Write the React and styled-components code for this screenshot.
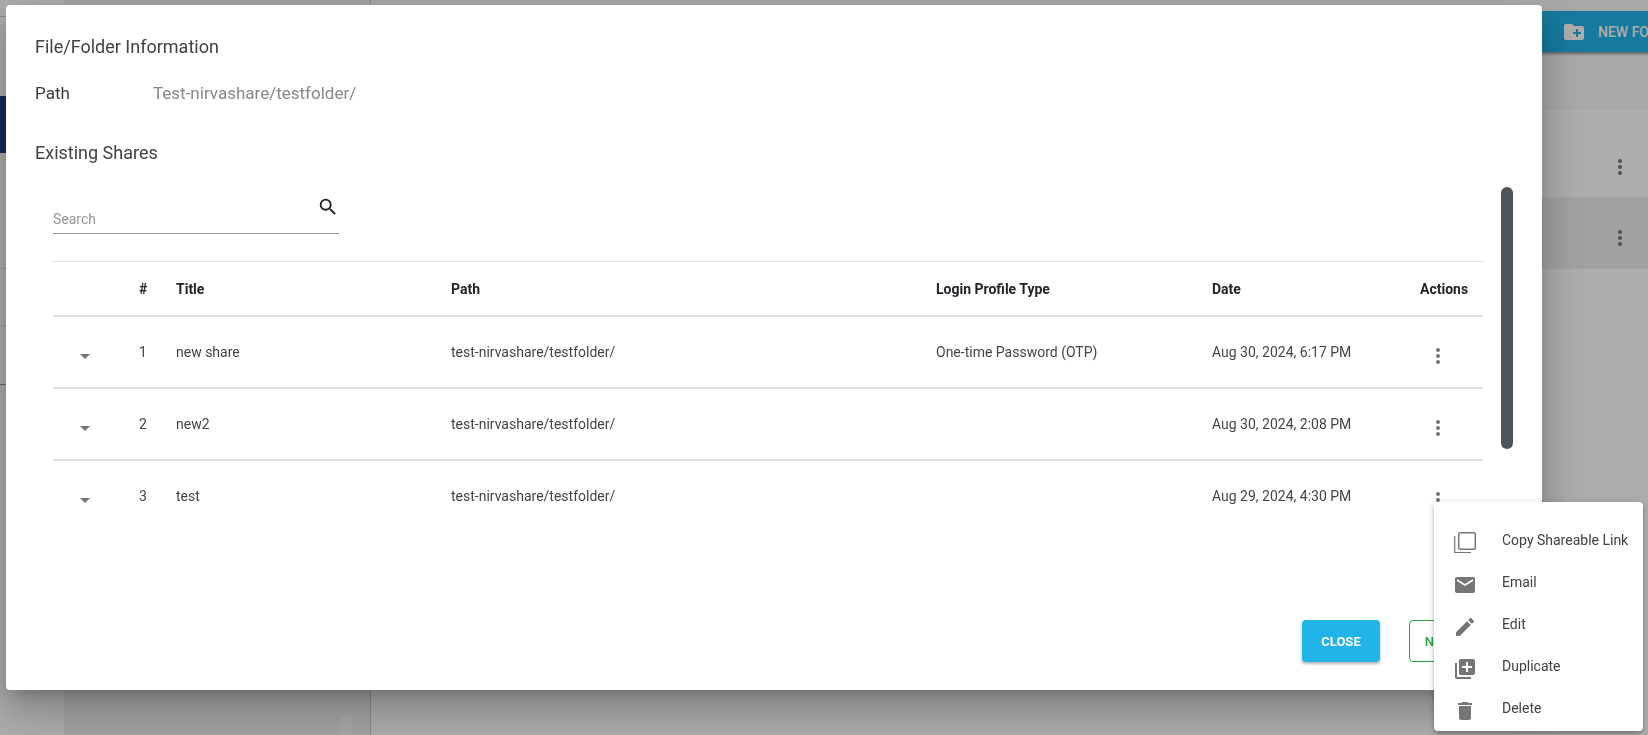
import React from 'react';
import styled, { createGlobalStyle } from 'styled-components';
import {
  MdArrowDropDown,
  MdCreateNewFolder,
  MdDelete,
  MdEdit,
  MdEmail,
  MdLibraryAdd,
  MdMoreVert,
  MdSearch,
} from 'react-icons/md';

const GlobalStyle = createGlobalStyle`
  * {
    box-sizing: border-box;
  }
  body {
    margin: 0;
    overflow: hidden;
    background: #ffffff;
    font-family: Roboto, 'Liberation Sans', sans-serif;
    color: #212529;
  }
  button {
    font-family: inherit;
    cursor: pointer;
  }
`;

/* ---------- page behind the dialog ---------- */

const Page = styled.div`
  display: grid;
  grid-template-columns: 64px 307px 1fr;
  height: 100vh;
  overflow: hidden;
`;

const Rail = styled.nav`
  display: flex;
  flex-direction: column;
`;

const RailItem = styled.div`
  flex: none;
  height: ${(props) => props.height}px;
  background: ${(props) => props.color || 'transparent'};
  border-bottom: 1px solid ${(props) => props.line || 'transparent'};
`;

const Sidebar = styled.aside`
  display: flex;
  align-items: flex-end;
  justify-content: flex-end;
  padding-right: 18px;
  background: #f1f1f1;
  border-right: 1px solid #cccccc;
`;

const SidebarThumb = styled.div`
  width: 12px;
  height: 19px;
  background: #f8f8f8;
`;

const Main = styled.main`
  overflow: hidden;
`;

const MainContent = styled.div`
  width: calc(100% + 72px);
`;

const Toolbar = styled.div`
  display: flex;
  justify-content: flex-end;
  height: 52px;
  padding: 11px 16px 0 0;
  background: #fafafa;
`;

const NewFolderButton = styled.button`
  display: flex;
  align-items: center;
  gap: 12px;
  height: 41px;
  width: 167px;
  padding: 0 25px;
  border: none;
  border-radius: 4px;
  background: #20b4e9;
  color: #ffffff;
  font-size: 14px;
  font-weight: 500;
  white-space: nowrap;
  box-shadow: 0 2px 3px rgba(0, 0, 0, 0.4);

  svg {
    flex: none;
  }
`;

const FileRow = styled.div`
  display: flex;
  align-items: flex-end;
  justify-content: flex-end;
  height: ${(props) => props.height}px;
  padding: 0 88px 18px 0;
  background: ${(props) => props.color || '#ffffff'};
  border-bottom: 1px solid #f2f2f2;
`;

/* ---------- dialog ---------- */

const Backdrop = styled.div`
  position: fixed;
  inset: 0;
  padding: 5px 106px 0 6px;
  background: rgba(0, 0, 0, 0.32);
`;

const Dialog = styled.section`
  padding: 28px 29px;
  background: #ffffff;
  border-radius: 4px;
  box-shadow: 0 11px 15px -7px rgba(0, 0, 0, 0.2),
    0 24px 38px 3px rgba(0, 0, 0, 0.14), 0 9px 46px 8px rgba(0, 0, 0, 0.12);
`;

const Heading = styled.h2`
  margin: 0;
  font-size: 18px;
  line-height: 28px;
  font-weight: 400;
  color: #424242;
`;

const PathLine = styled.dl`
  display: grid;
  grid-template-columns: 118px 1fr;
  margin: 18px 0 32px;
  font-size: 17px;
  line-height: 28px;
`;

const PathLabel = styled.dt`
  color: #3a3a3a;
`;

const PathValue = styled.dd`
  margin: 0;
  color: #888888;
`;

const ScrollArea = styled.div`
  display: flex;
  justify-content: space-between;
  gap: 18px;
  height: 342px;
  margin-top: 20px;
  padding-left: 18px;
  overflow: hidden;
`;

const ScrollBody = styled.div`
  flex: 1;
`;

const ScrollThumb = styled.div`
  width: 12px;
  height: 262px;
  border-radius: 6px;
  background: #4d555b;
`;

const SearchField = styled.label`
  display: flex;
  width: 286px;
  height: 47px;
  margin-bottom: 27px;
  border-bottom: 1px solid #949494;
  color: #212121;

  svg {
    margin: 9px 0 0;
  }
`;

const SearchInput = styled.input`
  flex: 1;
  min-width: 0;
  padding: 18px 0 0;
  border: none;
  outline: none;
  background: none;
  font: 400 14px Roboto, 'Liberation Sans', sans-serif;
  &::placeholder {
    color: #949494;
  }
`;

const Table = styled.table`
  width: 100%;
  table-layout: fixed;
  border-collapse: separate;
  border-spacing: 0;
  border-top: 1px solid #dee2e6;
  font-size: 14px;
`;

const Column = styled.col`
  width: ${(props) => (props.$width ? `${props.$width}px` : 'auto')};
`;

const HeadCell = styled.th`
  height: 55px;
  padding: 0 0 0 12px;
  text-align: left;
  font-weight: 700;
  border-bottom: 2px solid #dee2e6;
`;

const Cell = styled.td`
  height: 72px;
  padding: 0 0 0 12px;
  color: #424548;
  border-bottom: 2px solid #dee2e6;
`;

const IconButton = styled.button`
  display: flex;
  margin-top: 8px;
  margin-left: ${(props) => props.$indent}px;
  padding: 0;
  border: none;
  background: none;
  color: #757575;
`;

const Footer = styled.footer`
  display: flex;
  justify-content: flex-end;
  gap: 29px;
  margin-top: 91px;
`;

const CloseButton = styled.button`
  height: 42px;
  width: 78px;
  border: none;
  border-radius: 4px;
  background: #20b4e9;
  color: #ffffff;
  font-size: 13px;
  font-weight: 700;
  box-shadow: 0 2px 3px rgba(0, 0, 0, 0.3);
`;

const OutlineButton = styled.button`
  height: 42px;
  width: 104px;
  padding: 0;
  border: 1px solid #28a745;
  border-radius: 4px;
  background: #ffffff;
  color: #28a745;
  font-size: 13px;
  font-weight: 500;
`;

/* ---------- row menu ---------- */

const Menu = styled.div`
  position: fixed;
  right: 5px;
  bottom: 4px;
  width: 209px;
  padding: 17px 0 2px;
  border-radius: 4px;
  background: #ffffff;
  box-shadow: 0 2px 4px -1px rgba(0, 0, 0, 0.2),
    0 4px 5px rgba(0, 0, 0, 0.14), 0 1px 10px rgba(0, 0, 0, 0.12);
`;

const MenuItem = styled.button`
  display: flex;
  gap: 25px;
  width: 100%;
  height: 42px;
  padding: 12px 0 0 19px;
  border: none;
  background: none;
  color: #424242;
  font-size: 14px;
  line-height: 18px;
  text-align: left;

  svg {
    flex: none;
    color: #757575;
  }
`;

const CopyIcon = () => (
  <svg width="24" height="24" viewBox="0 0 24 24" fill="none" stroke="currentColor">
    <rect x="5.7" y="1.7" width="16.6" height="16.6" rx="1.5" strokeWidth="1.5" />
    <path d="M1.7 5v16.5H18" strokeWidth="1.2" />
  </svg>
);

const columns = [
  { label: '', width: 74 },
  { label: '#', width: 37 },
  { label: 'Title', width: 275 },
  { label: 'Path' },
  { label: 'Login Profile Type', width: 276 },
  { label: 'Date', width: 208 },
  { label: 'Actions', width: 75 },
];

const shares = [
  {
    title: 'new share',
    path: 'test-nirvashare/testfolder/',
    profile: 'One-time Password (OTP)',
    date: 'Aug 30, 2024, 6:17 PM',
  },
  {
    title: 'new2',
    path: 'test-nirvashare/testfolder/',
    profile: '',
    date: 'Aug 30, 2024, 2:08 PM',
  },
  {
    title: 'test',
    path: 'test-nirvashare/testfolder/',
    profile: '',
    date: 'Aug 29, 2024, 4:30 PM',
  },
];

const menuItems = [
  { label: 'Copy Shareable Link', icon: <CopyIcon /> },
  { label: 'Email', icon: <MdEmail size={24} /> },
  { label: 'Edit', icon: <MdEdit size={24} /> },
  { label: 'Duplicate', icon: <MdLibraryAdd size={24} /> },
  { label: 'Delete', icon: <MdDelete size={24} /> },
];

function Background() {
  return (
    <Page>
      <Rail>
        <RailItem height={17} line="#cccccc" />
        <RailItem height={79} />
        <RailItem height={57} color="#1e4482" />
        <RailItem height={116} line="#e6e6e6" />
        <RailItem height={57} line="#e6e6e6" />
        <RailItem height={59} line="#999999" />
      </Rail>
      <Sidebar>
        <SidebarThumb />
      </Sidebar>
      <Main>
        <MainContent>
          <Toolbar>
            <NewFolderButton>
              <MdCreateNewFolder size={24} />
              NEW FOLDER
            </NewFolderButton>
          </Toolbar>
          <FileRow height={57} color="#fafafa" />
          <FileRow height={89}>
            <MdMoreVert size={24} color="#757575" />
          </FileRow>
          <FileRow height={71} color="#eeeeee">
            <MdMoreVert size={24} color="#757575" />
          </FileRow>
        </MainContent>
      </Main>
    </Page>
  );
}

function ShareRow({ index, share }) {
  return (
    <tr>
      <Cell>
        <IconButton $indent={8} aria-label="Expand">
          <MdArrowDropDown size={24} />
        </IconButton>
      </Cell>
      <Cell>{index}</Cell>
      <Cell>{share.title}</Cell>
      <Cell>{share.path}</Cell>
      <Cell>{share.profile}</Cell>
      <Cell>{share.date}</Cell>
      <Cell>
        <IconButton $indent={6} aria-label="Share actions">
          <MdMoreVert size={24} />
        </IconButton>
      </Cell>
    </tr>
  );
}

export default function App() {
  return (
    <>
      <GlobalStyle />
      <Background />
      <Backdrop>
        <Dialog role="dialog" aria-label="File/Folder Information">
          <Heading>File/Folder Information</Heading>
          <PathLine>
            <PathLabel>Path</PathLabel>
            <PathValue>Test-nirvashare/testfolder/</PathValue>
          </PathLine>
          <Heading>Existing Shares</Heading>
          <ScrollArea>
            <ScrollBody>
              <SearchField>
                <SearchInput placeholder="Search" aria-label="Search" />
                <MdSearch size={22} />
              </SearchField>
              <Table>
                <colgroup>
                  {columns.map((column, i) => (
                    <Column key={i} $width={column.width} />
                  ))}
                </colgroup>
                <thead>
                  <tr>
                    {columns.map((column, i) => (
                      <HeadCell key={i}>{column.label}</HeadCell>
                    ))}
                  </tr>
                </thead>
                <tbody>
                  {shares.map((share, i) => (
                    <ShareRow key={i} index={i + 1} share={share} />
                  ))}
                </tbody>
              </Table>
            </ScrollBody>
            <ScrollThumb />
          </ScrollArea>
          <Footer>
            <CloseButton>CLOSE</CloseButton>
            <OutlineButton>NEW SHARE</OutlineButton>
          </Footer>
        </Dialog>
      </Backdrop>
      <Menu role="menu">
        {menuItems.map((item) => (
          <MenuItem key={item.label} role="menuitem">
            {item.icon}
            {item.label}
          </MenuItem>
        ))}
      </Menu>
    </>
  );
}
